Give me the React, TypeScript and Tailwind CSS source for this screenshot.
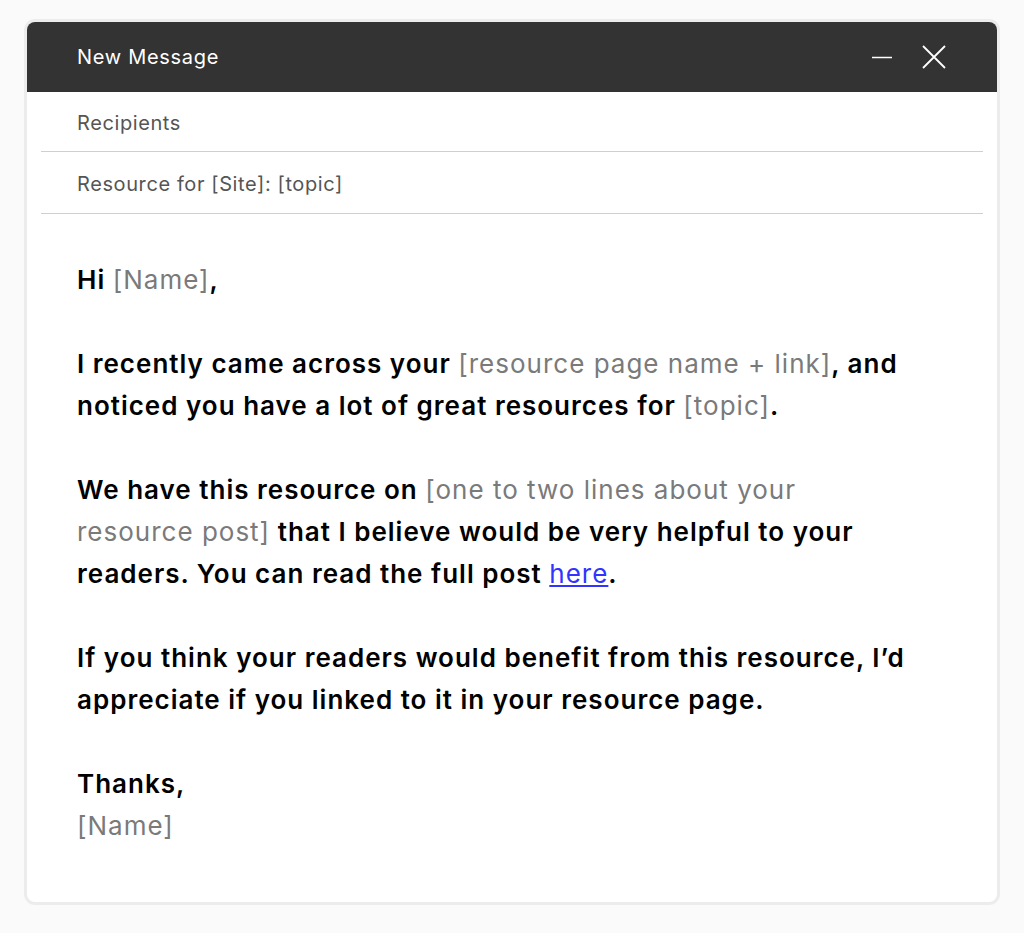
import React from 'react';

function Ph({ children }: { children: React.ReactNode }) {
  return <span className="font-normal text-[#7a7a7a]">{children}</span>;
}

export default function App() {
  return (
    <div className="min-h-[933px] bg-[#fafafa] pt-[22px] pl-[27px] pr-[27px] font-['Inter',sans-serif]">
      <div className="w-[970px] h-[880px] overflow-hidden rounded-[8px] bg-white shadow-[0_0_0_3px_#ececec]">
        <div className="flex h-[70px] items-center justify-between bg-[#333333] pl-[50px] pr-[50px]">
          <span className="text-[20px] tracking-[0.7px] text-white">New Message</span>
          <div className="flex items-center gap-[28px]">
            <svg width="22" height="22" viewBox="0 0 22 22" fill="none" stroke="white" strokeWidth="1.6">
              <path d="M1 11.5H21" />
            </svg>
            <svg width="26" height="26" viewBox="0 0 26 26" fill="none" stroke="white" strokeWidth="1.8">
              <path d="M2 2L24 24M24 2L2 24" />
            </svg>
          </div>
        </div>
        <div className="px-[14px]">
          <div className="flex h-[60px] items-center border-b border-[#cfcfcf] pl-[36px] pt-[3px] text-[20px] tracking-[0.6px] text-[#555555]">
            Recipients
          </div>
          <div className="flex h-[62px] items-center border-b border-[#cfcfcf] pl-[36px] pt-[2px] text-[20px] tracking-[0.6px] text-[#555555]">
            Resource for [Site]: [topic]
          </div>
        </div>
        <div className="pl-[50px] pr-[85px] pt-[45px] text-[26px] font-semibold leading-[42px] tracking-[1px] text-black">
          <p>
            Hi <Ph>[Name]</Ph>,
          </p>
          <p className="mt-[42px]">
            I recently came across your <Ph>[resource page name + link]</Ph>, and noticed you have a lot of great
            resources for <Ph>[topic]</Ph>.
          </p>
          <p className="mt-[42px]">
            We have this resource on <Ph>[one to two lines about your resource post]</Ph> that I believe would be
            very helpful to your readers. You can read the full post{' '}
            <a href="#" className="font-normal text-[#3333ff] underline">
              here
            </a>
            .
          </p>
          <p className="mt-[42px]">
            If you think your readers would benefit from this resource, I’d appreciate if you linked to it in your
            resource page.
          </p>
          <p className="mt-[42px]">
            Thanks,
            <br />
            <Ph>[Name]</Ph>
          </p>
        </div>
      </div>
    </div>
  );
}
